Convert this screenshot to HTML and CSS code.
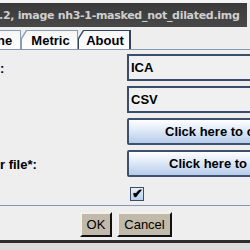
FILE: index.html
```html
<!DOCTYPE html>
<html>
<head>
<meta charset="utf-8">
<link rel="stylesheet" href="styles.css">
</head>
<body>
<div class="window">
  <div class="titlebar"><span class="title">.2, image nh3-1-masked_not_dilated.img</span></div>
  <div class="tabs">
    <div class="tab first"><span class="tab-in">ne</span></div>
    <div class="tab"><span class="tab-in">Metric</span></div>
    <div class="tab last"><span class="tab-in">About</span></div>
  </div>
  <div class="panel">
    <div class="row"><span class="label">:</span><div class="field text">ICA</div></div>
    <div class="row"><span class="label"></span><div class="field text">CSV</div></div>
    <div class="row"><span class="label"></span><div class="field btn wide">Click here to choose file</div></div>
    <div class="row"><span class="label">r file*:</span><div class="field btn">Click here to choose file</div></div>
    <div class="row check-row"><span class="label"></span><span class="check">&#10004;</span></div>
  </div>
  <div class="footer">
    <button class="dlg-btn ok">OK</button>
    <button class="dlg-btn cancel">Cancel</button>
  </div>
  <div class="bottom"></div>
</div>
</body>
</html>
```
FILE: styles.css
```css
html, body {
  margin: 0;
  padding: 0;
  width: 250px;
  height: 250px;
  overflow: hidden;
  background: #eeeeee;
  font-family: "Liberation Sans", Arial, sans-serif;
}
.window {
  width: 250px;
  height: 250px;
  display: flex;
  flex-direction: column;
  background: #eeeeee;
  border-top: 3px solid #f4f4f4;
  box-sizing: border-box;
}
.titlebar {
  height: 24px;
  background: linear-gradient(#3a3a3a, #484848);
  margin-right: 3px;
  display: flex;
  align-items: center;
  overflow: hidden;
  white-space: nowrap;
}
.title {
  font-family: "DejaVu Sans", sans-serif;
  font-weight: bold;
  font-size: 11px;
  letter-spacing: -0.3px;
  color: #cfcfcf;
  margin-left: -1px;
}
.tabs {
  height: 21px;
  display: flex;
  align-items: flex-end;
  border-bottom: 1px solid #8497b5;
  padding-top: 1px;
}
.tab {
  width: 57px;
  height: 19px;
  background: #8a9bb4;
  clip-path: polygon(0 8px, 5px 0, 100% 0, 100% 100%, 0 100%);
  padding: 1px 1px 0 1px;
  box-sizing: border-box;
}
.tab-in {
  display: flex;
  align-items: center;
  justify-content: center;
  height: 100%;
  background: linear-gradient(#f6f6f6, #ffffff);
  clip-path: polygon(0 8px, 5px 0, 100% 0, 100% 100%, 0 100%);
  font-weight: bold;
  font-size: 13px;
  color: #000;
  padding: 0 0 0 2px;
}
.tab.first {
  width: 33px;
  margin-left: -12px;
  clip-path: none;
}
.tab.first .tab-in {
  clip-path: none;
  justify-content: flex-start;
  padding: 0 0 0 8px;
}
.tab.last { width: 53px; background: #33435e; padding-right: 2px; }
.panel {
  flex: 1;
  display: flex;
  flex-direction: column;
  gap: 5px;
  padding-top: 4px;
}
.row {
  display: flex;
  align-items: center;
  height: 27px;
}
.label {
  width: 127px;
  flex: none;
  font-weight: bold;
  font-size: 13px;
  color: #000;
  margin-top: 2px;
}
.field {
  flex: none;
  width: 200px;
  height: 27px;
  box-sizing: border-box;
  display: flex;
  align-items: center;
  font-weight: bold;
  font-size: 13px;
  color: #000;
  white-space: nowrap;
}
.text {
  border: 2px solid #3a4d6c;
  background: #f0f0f0;
  padding-left: 2px;
}
.btn {
  border: 2px solid #3e5070;
  border-radius: 2px;
  background: linear-gradient(#ffffff 0%, #e6eef9 35%, #b6cceb 100%);
  padding-left: 40px;
}
.btn.wide { padding-left: 36px; }
.check-row { height: 16px; margin-top: 4px; }
.check {
  margin-left: 3px;
  width: 14px;
  height: 14px;
  box-sizing: border-box;
  border: 1px solid #3a4d6c;
  background: linear-gradient(#e8f0fb, #b9cdea);
  font-size: 13px;
  font-weight: bold;
  line-height: 12px;
  text-align: center;
  color: #000;
  overflow: hidden;
}
.footer {
  height: 35px;
  border-top: 1px solid #8497b5;
  display: flex;
  align-items: center;
  padding-left: 80px;
  padding-top: 2px;
  gap: 5px;
  box-sizing: border-box;
}
.dlg-btn {
  height: 25px;
  margin: 0;
  padding: 0;
  background: #c1b9a9;
  border: 2px solid;
  border-color: #f2f0ea #111 #111 #f2f0ea;
  font-family: "Liberation Sans", Arial, sans-serif;
  font-size: 13px;
  color: #000;
}
.ok { width: 32px; }
.cancel { width: 55px; }
.bottom {
  height: 7px;
  border-top: 3px solid #2e2e2e;
  background: #dcdcdc;
}
```
